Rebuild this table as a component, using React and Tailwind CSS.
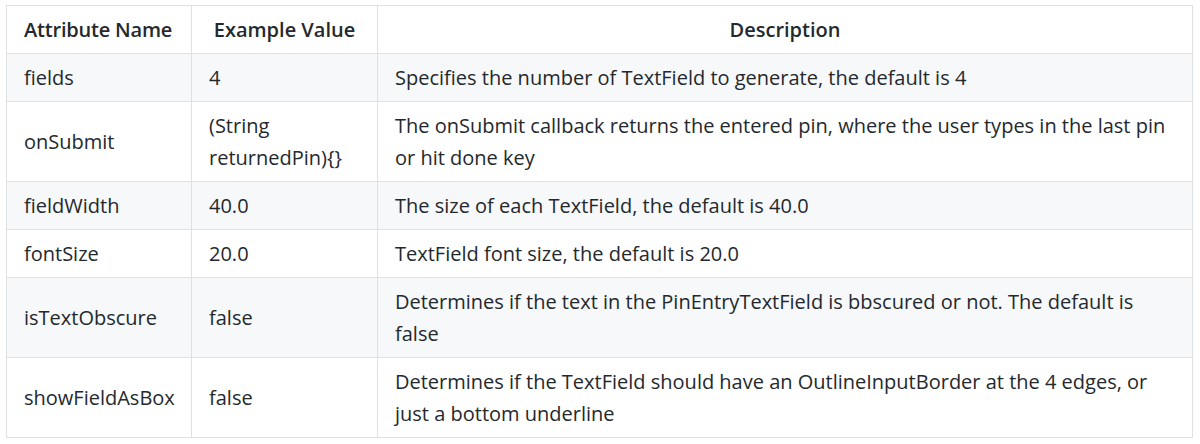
const ROWS = [
  { name: 'fields', value: '4', desc: ['Specifies the number of TextField to generate, the default is 4'] },
  { name: 'onSubmit', value: '(String returnedPin){}', desc: ['The onSubmit callback returns the entered pin, where the user types in the last pin', 'or hit done key'] },
  { name: 'fieldWidth', value: '40.0', desc: ['The size of each TextField, the default is 40.0'] },
  { name: 'fontSize', value: '20.0', desc: ['TextField font size, the default is 20.0'] },
  { name: 'isTextObscure', value: 'false', desc: ['Determines if the text in the PinEntryTextField is bbscured or not. The default is', 'false'] },
  { name: 'showFieldAsBox', value: 'false', desc: ['Determines if the TextField should have an OutlineInputBorder at the 4 edges, or', 'just a bottom underline'] },
]

const cell = 'border border-[#dfe2e5] px-[17px] pt-2 pb-[7px]'

export default function App() {
  return (
    <div className="h-[444px] w-[1200px] bg-white pl-[6px] pt-[5px] font-['Open_Sans','Liberation_Sans',sans-serif] text-[20px] leading-[32px] text-[#24292e]">
      <table className="w-[1187px] table-fixed border-collapse">
        <colgroup>
          <col className="w-[185px]" />
          <col className="w-[186px]" />
          <col />
        </colgroup>
        <thead>
          <tr className="bg-white">
            <th className={`${cell} whitespace-nowrap text-left font-semibold tracking-[-0.2px]`}>Attribute Name</th>
            <th className={`${cell} whitespace-nowrap text-center font-semibold`}>Example Value</th>
            <th className={`${cell} whitespace-nowrap text-center font-semibold`}>Description</th>
          </tr>
        </thead>
        <tbody>
          {ROWS.map((r, i) => (
            <tr key={r.name} className={i % 2 === 0 ? 'bg-[#f6f8fa]' : 'bg-white'}>
              <td className={cell}>{r.name}</td>
              <td className={cell}>{r.value}</td>
              <td className={cell}>
                {r.desc.map((line, j) => (
                  <span key={j} className="block whitespace-nowrap">{line}</span>
                ))}
              </td>
            </tr>
          ))}
        </tbody>
      </table>
    </div>
  )
}
